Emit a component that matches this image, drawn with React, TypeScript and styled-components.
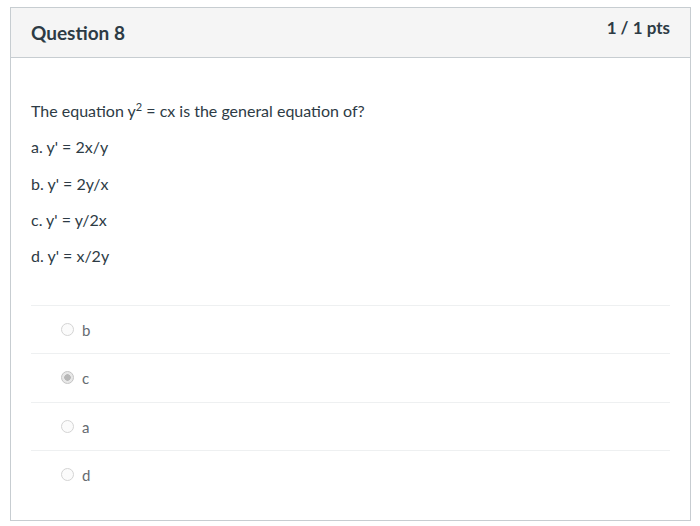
import React from "react";
import styled, { createGlobalStyle } from "styled-components";

const Global = createGlobalStyle`
  html, body { margin: 0; padding: 0; background: #fff; }
  body { font-family: Lato, "Open Sans", "Liberation Sans", sans-serif; }
`;

const Page = styled.div`
  padding: 7px 0 0 10px;
`;

const Card = styled.div`
  width: 681px;
  height: 514px;
  box-sizing: border-box;
  border: 1px solid #c7cdd1;
  background: #fff;
  display: flex;
  flex-direction: column;
`;

const Header = styled.div`
  height: 50px;
  box-sizing: border-box;
  background: #f5f5f5;
  border-bottom: 1px solid #c7cdd1;
  display: flex;
  justify-content: space-between;
  padding: 0 20px;
`;

const Title = styled.div`
  font-size: 19px;
  font-weight: 700;
  color: #2d3b45;
  line-height: 22px;
  margin-top: 14px;
`;

const Points = styled.div`
  font-size: 17px;
  font-weight: 700;
  color: #2d3b45;
  line-height: 20px;
  margin-top: 10px;
`;

const Body = styled.div`
  padding: 41px 20px 0;
`;

const Line = styled.p`
  margin: 0 0 12.25px;
  font-size: 16px;
  line-height: 24px;
  color: #2d3b45;
  sup { font-size: 11px; line-height: 0; vertical-align: 6px; }
`;

const Answers = styled.div`
  margin-top: 37px;
`;

const Answer = styled.div`
  height: 48.33px;
  box-sizing: border-box;
  border-top: 1px solid #eef0f1;
  display: flex;
  align-items: center;
  padding: 0 0 0 30px;
  gap: 8px;
`;

const Radio = styled.span<{ $checked?: boolean }>`
  width: 13px;
  height: 13px;
  box-sizing: border-box;
  border-radius: 50%;
  border: 1px solid ${(p) => (p.$checked ? "#c4c4c4" : "#d4d4d4")};
  background: ${(p) => (p.$checked ? "radial-gradient(circle, #b8b8b8 0 3px, #e8e8e8 3.5px)" : "#fbfbfb")};
`;

const AnswerText = styled.span`
  font-size: 15px;
  color: #666b70;
  line-height: 20px;
  margin-top: 1px;
`;

const answers = [
  { t: "b", c: false },
  { t: "c", c: true },
  { t: "a", c: false },
  { t: "d", c: false },
];

export default function App() {
  return (
    <Page>
      <Global />
      <Card>
        <Header>
          <Title>Question 8</Title>
          <Points>1 / 1 pts</Points>
        </Header>
        <Body>
          <Line>
            The equation y<sup>2</sup> = cx is the general equation of?
          </Line>
          <Line>a. y' = 2x/y</Line>
          <Line>b. y' = 2y/x</Line>
          <Line>c. y' = y/2x</Line>
          <Line>d. y' = x/2y</Line>
          <Answers>
            {answers.map((a) => (
              <Answer key={a.t}>
                <Radio $checked={a.c} />
                <AnswerText>{a.t}</AnswerText>
              </Answer>
            ))}
          </Answers>
        </Body>
      </Card>
    </Page>
  );
}
